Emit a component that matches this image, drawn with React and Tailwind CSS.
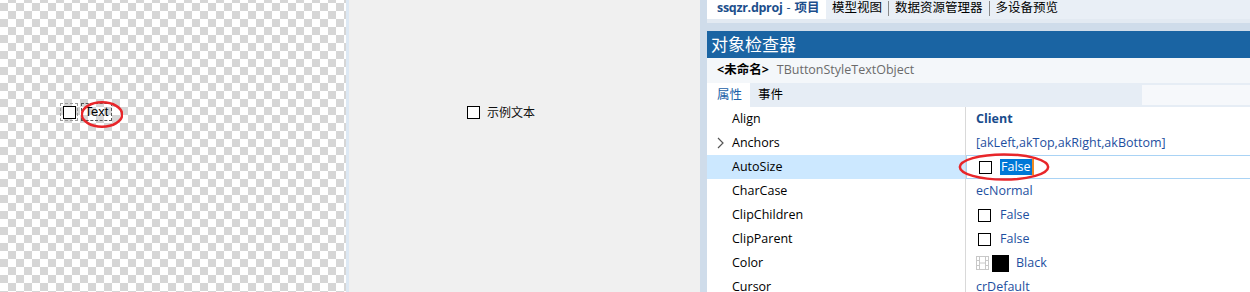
import React from "react";

const font = "font-['Open_Sans','Noto_Sans_CJK_SC',sans-serif]";

function Box({ className = "" }) {
  return <span className={`inline-block shrink-0 w-[13px] h-[13px] border border-black bg-white ${className}`} />;
}

function FilmIcon() {
  return (
    <svg width="13" height="14" viewBox="0 0 13 14" className="shrink-0">
      <rect x="0.5" y="0.5" width="12" height="13" fill="none" stroke="#c8c8c8" />
      <line x1="3.5" y1="0" x2="3.5" y2="14" stroke="#c8c8c8" />
      <line x1="9.5" y1="0" x2="9.5" y2="14" stroke="#c8c8c8" />
      <line x1="0" y1="4.5" x2="3" y2="4.5" stroke="#c8c8c8" />
      <line x1="0" y1="9.5" x2="3" y2="9.5" stroke="#c8c8c8" />
      <line x1="10" y1="4.5" x2="13" y2="4.5" stroke="#c8c8c8" />
      <line x1="10" y1="9.5" x2="13" y2="9.5" stroke="#c8c8c8" />
      <line x1="3" y1="7" x2="10" y2="7" stroke="#c8c8c8" />
    </svg>
  );
}

function RedEllipse({ className }) {
  return (
    <svg className={`absolute pointer-events-none ${className}`} viewBox="0 0 100 40" preserveAspectRatio="none">
      <ellipse cx="50" cy="20" rx="48" ry="18" fill="none" stroke="#e8262a" strokeWidth="2.5" vectorEffect="non-scaling-stroke" />
    </svg>
  );
}

const rows = [
  { name: "Align", value: <span className="font-bold text-[#1a4c8c]">Client</span> },
  { name: "Anchors", chevron: true, value: "[akLeft,akTop,akRight,akBottom]" },
  { name: "AutoSize", selected: true },
  { name: "CharCase", value: "ecNormal" },
  { name: "ClipChildren", check: true },
  { name: "ClipParent", check: true },
  { name: "Color", color: true },
  { name: "Cursor", value: "crDefault" },
];

function PropRow({ row }) {
  return (
    <div className="flex h-[24px] shrink-0">
      <div className={`w-[258px] flex items-center relative pl-[25px] text-black ${row.selected ? "bg-[#cce8ff]" : "bg-white"}`}>
        {row.chevron && (
          <svg width="7" height="12" viewBox="0 0 7 12" className="absolute left-[10px] top-[6px]">
            <path d="M1 1l5 5-5 5" fill="none" stroke="#555" strokeWidth="1.2" />
          </svg>
        )}
        {row.name}
      </div>
      <div className="w-px bg-[#d9d9d9]" />
      {row.selected ? (
        <div className="flex-1 flex items-center bg-white border-y border-l border-[#a9d3f5] relative">
          <Box className="ml-[12px]" />
          <span className="ml-[8px] bg-[#0078d7] text-white px-px leading-[16px]">False</span>
          <span className="w-[2px] h-[16px] bg-[#f08a24]" />
          <RedEllipse className="left-[-9px] top-[-3px] w-[92px] h-[28px]" />
        </div>
      ) : (
        <div className="flex-1 flex items-center bg-white text-[#1e4fa0] pl-[10px] whitespace-nowrap">
          {row.check && (
            <>
              <Box className="ml-[2px]" />
              <span className="ml-[9px]">False</span>
            </>
          )}
          {row.color && (
            <>
              <FilmIcon />
              <span className="ml-[3px] inline-block w-[17px] h-[17px] bg-black" />
              <span className="ml-[7px]">Black</span>
            </>
          )}
          {row.value}
        </div>
      )}
    </div>
  );
}

export default function App() {
  return (
    <div className={`flex w-[1250px] h-[292px] overflow-hidden ${font} text-[12.5px] whitespace-nowrap`}>
      {/* design canvas */}
      <div className="w-[346px] shrink-0 relative bg-[image:repeating-conic-gradient(#d6d6d6_0_25%,#ffffff_0_50%)] bg-[length:16px_16px] bg-[position:0_-5px]">
        <div className="absolute left-[60px] top-[103px] flex items-center">
          <div className="w-[18px] h-[18px] border border-dashed border-[#9a9a9a] flex items-center justify-center">
            <Box className="border-[#333]" />
          </div>
          <div className="ml-[3px] w-[31px] h-[18px] border border-dashed border-[#555] flex items-center justify-center text-[13px] text-black font-['Liberation_Sans',sans-serif]">
            Text
          </div>
        </div>
        <RedEllipse className="left-[81px] top-[101px] w-[42px] h-[27px]" />
      </div>
      <div className="w-[3px] shrink-0 bg-[#dde8f3]" />
      {/* preview */}
      <div className="w-[351px] shrink-0 bg-[#f0f0f0] flex items-start">
        <div className="mt-[106px] ml-[118px] flex items-center text-[12px] text-[#111]">
          <Box className="border-[#333]" />
          <span className="ml-[7px] leading-[13px]">示例文本</span>
        </div>
      </div>
      {/* IDE right panel */}
      <div className="flex-1 bg-[#cfdcea] pl-[7px] flex flex-col">
        <div className="h-[19px] bg-[#e9eff6] flex items-stretch shrink-0 leading-[15px]">
          <div className="bg-white w-[119px] pl-[10px] text-[#1d4f8c] font-bold">
            <span className="tracking-[-0.3px]">ssqzr.dproj</span>
            <span className="mx-[4px] font-normal">-</span>
            <span>项目</span>
          </div>
          <div className="px-[6px]">模型视图</div>
          <div className="w-px bg-[#8a8a8a] mt-[1px] mb-[3px]" />
          <div className="px-[6px]">数据资源管理器</div>
          <div className="w-px bg-[#8a8a8a] mt-[1px] mb-[3px]" />
          <div className="px-[6px]">多设备预览</div>
        </div>
        <div className="h-[4px] bg-[#e3eaf2] shrink-0" />
        <div className="h-[8px] shrink-0" />
        <div className="h-[27px] bg-[#1a64a3] text-white text-[17px] flex items-center pl-[4px] shrink-0">
          对象检查器
        </div>
        <div className="h-[25px] bg-[#f4f7fa] flex items-center pl-[10px] shrink-0">
          <span className="font-bold text-black">&lt;未命名&gt;</span>
          <span className="ml-[8px] text-[#6b6b6b]">TButtonStyleTextObject</span>
        </div>
        <div className="h-[24px] bg-[#e6edf5] flex items-stretch shrink-0">
          <div className="bg-white w-[43px] flex items-center pl-[10px] text-[#1a5fa8]">属性</div>
          <div className="flex items-center pl-[8px]">事件</div>
          <div className="flex-1" />
          <div className="w-[108px] bg-[#f6f8fb] my-[2px]" />
        </div>
        <div className="flex flex-col bg-white flex-1">
          {rows.map((r) => (
            <PropRow key={r.name} row={r} />
          ))}
        </div>
      </div>
    </div>
  );
}
